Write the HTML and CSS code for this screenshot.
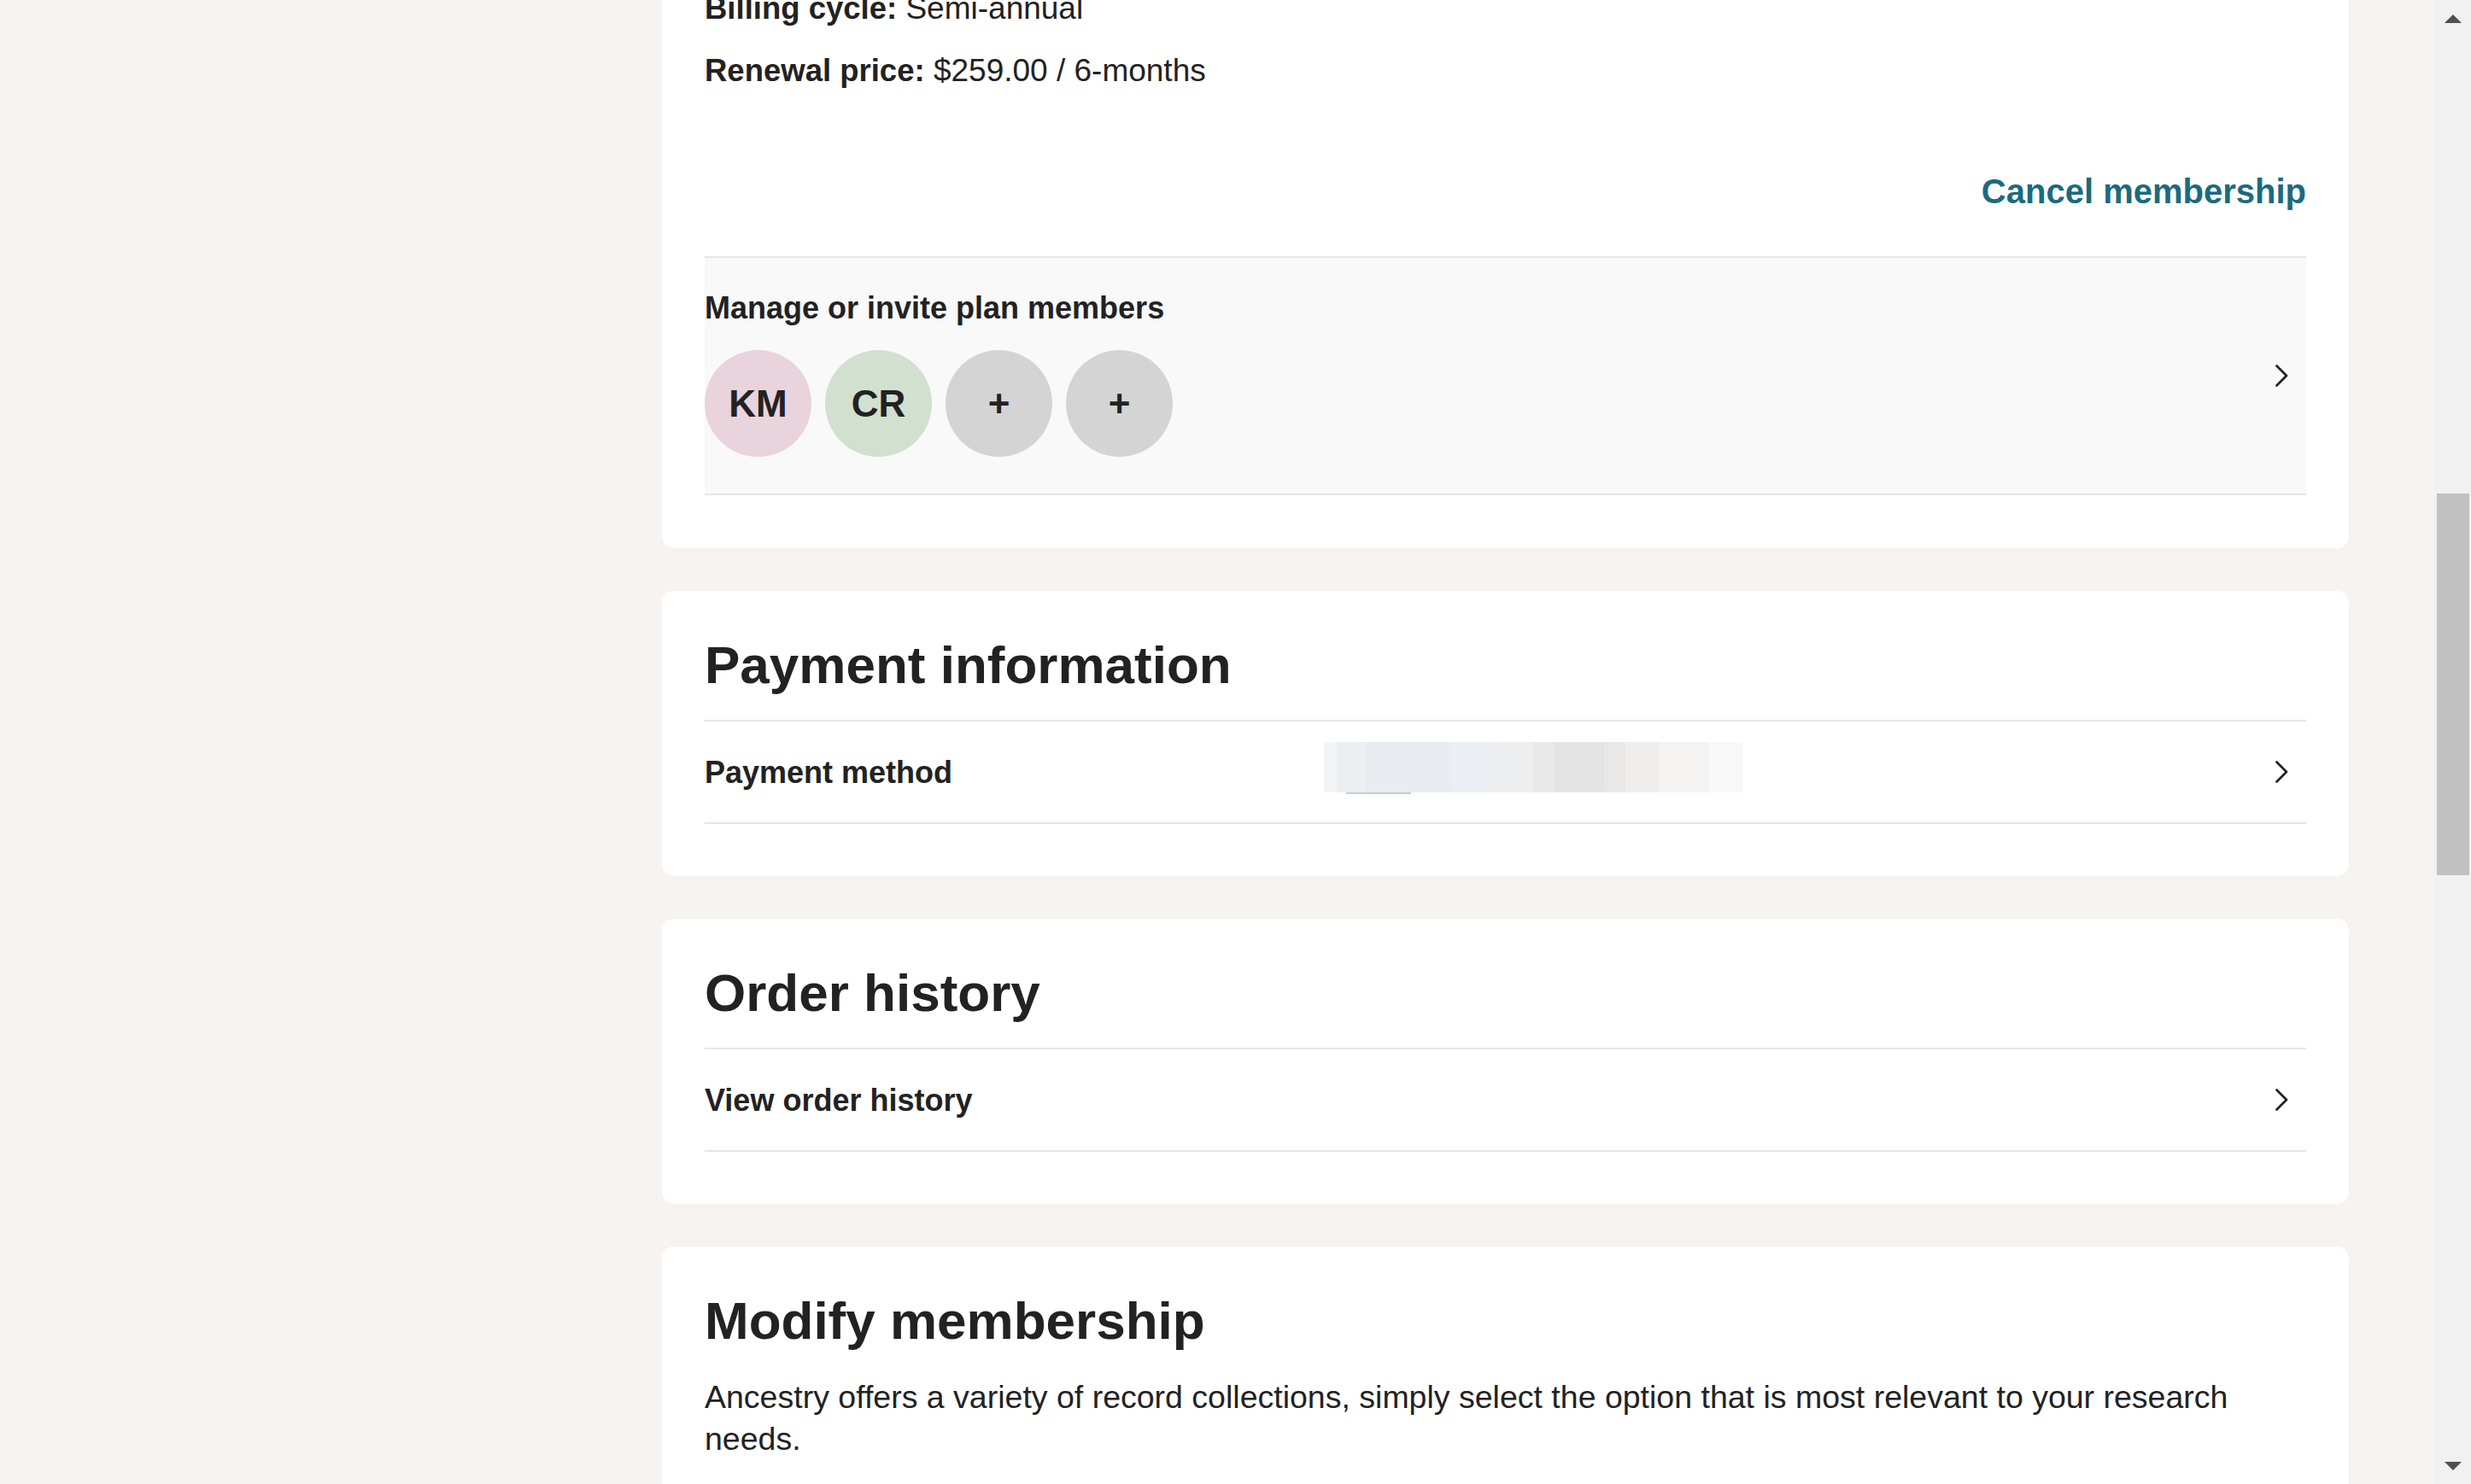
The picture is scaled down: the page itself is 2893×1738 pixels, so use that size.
FILE: index.html
```html
<!DOCTYPE html>
<html lang="en">
<head>
  <meta charset="UTF-8" />
  <meta name="viewport" content="width=device-width, initial-scale=1.0"/>
  <title>Membership settings</title>
  <link rel="stylesheet" href="styles.css">
</head>
<body>
<div class="page">
  <div class="layout">
    <aside class="sidebar"></aside>

    <main class="cards">
      <!-- 🔹 Membership card (scrolled, top is out of view) -->
      <section class="card">
        <div class="details">
          <p><strong>Billing cycle:</strong> Semi-annual</p>
          <p><strong>Renewal price:</strong> $259.00 / 6-months</p>
        </div>
        <div class="card-actions">
          <a class="link" href="#">Cancel membership</a>
        </div>
        <a class="members" href="#">
          <div>
            <div class="row-label">Manage or invite plan members</div>
            <div class="avatars">
              <span class="avatar avatar-pink">KM</span>
              <span class="avatar avatar-green">CR</span>
              <span class="avatar avatar-empty">+</span>
              <span class="avatar avatar-empty">+</span>
            </div>
          </div>
          <svg class="chevron chevron-low" width="16" height="28" viewBox="0 0 16 28"><path d="M2.5 2.5 L14 14 L2.5 25.5" /></svg>
        </a>
      </section>

      <!-- 🔹 Payment -->
      <section class="card">
        <h2 class="card-title">Payment information</h2>
        <div class="list">
          <a class="row row-grid" href="#">
            <span class="row-label">Payment method</span>
            <span class="blur"></span>
            <svg class="chevron" width="16" height="28" viewBox="0 0 16 28"><path d="M2.5 2.5 L14 14 L2.5 25.5" /></svg>
          </a>
        </div>
      </section>

      <!-- 🔹 Orders -->
      <section class="card">
        <h2 class="card-title">Order history</h2>
        <div class="list">
          <a class="row" href="#">
            <span class="row-label">View order history</span>
            <svg class="chevron" width="16" height="28" viewBox="0 0 16 28"><path d="M2.5 2.5 L14 14 L2.5 25.5" /></svg>
          </a>
        </div>
      </section>

      <!-- 🔹 Modify -->
      <section class="card">
        <h2 class="card-title">Modify membership</h2>
        <p class="intro">Ancestry offers a variety of record collections, simply select the option that is most relevant to your research needs.</p>
      </section>
    </main>
  </div>
</div>

<div class="scrollbar">
  <div class="sb-btn"><span class="arrow-up"></span></div>
  <div class="sb-track"><div class="sb-thumb"></div></div>
  <div class="sb-btn"><span class="arrow-down"></span></div>
</div>
</body>
</html>
```

FILE: styles.css
```css
body {
  margin: 0;
  height: 100vh;
  overflow: hidden;
  display: flex;
  background-color: #f6f3f0;
  font-family: "Liberation Sans", Arial, sans-serif;
  color: #222;
}
a {
  color: inherit;
  text-decoration: none;
}
.page {
  flex: 1;
  overflow: hidden;
}
.layout {
  display: grid;
  grid-template-columns: 625px 1fr;
  column-gap: 50px;
  max-width: 2650px;
  margin: -64px auto 0;
}
.cards {
  display: flex;
  flex-direction: column;
  gap: 50px;
}
.card {
  background: #fff;
  border-radius: 14px;
  padding: 50px 50px 61px;
}
.card-title {
  margin: 0;
  font-size: 62px;
  line-height: 74px;
  font-weight: bold;
}
.details {
  display: flex;
  flex-direction: column;
  gap: 25px;
}
.details p {
  margin: 0;
  font-size: 37px;
  line-height: 48px;
}
.details strong {
  font-size: 36.5px;
}
.card-actions {
  display: flex;
  justify-content: flex-end;
  padding: 93px 0 52px;
}
.link {
  color: #1b6a7f;
  font-size: 40px;
  line-height: 48px;
  font-weight: bold;
}
.members {
  display: flex;
  align-items: center;
  justify-content: space-between;
  padding: 37px 21px 43px 0;
  background: #f9f9f9;
  border-top: 2px solid #e5e5e5;
  border-bottom: 2px solid #e5e5e5;
  margin-bottom: 1px;
}
.row-label {
  font-size: 36px;
  line-height: 1.2;
  font-weight: bold;
}
.avatars {
  display: flex;
  gap: 16px;
  margin-top: 28px;
}
.avatar {
  width: 125px;
  height: 125px;
  border-radius: 50%;
  display: flex;
  align-items: center;
  justify-content: center;
  font-size: 44px;
  font-weight: bold;
  color: #222;
}
.avatar-pink { background: #e9d3dc; }
.avatar-green { background: #d1e0cf; }
.avatar-empty { background: #d4d4d4; }
.list {
  margin-top: 27px;
  border-top: 2px solid #e5e5e5;
}
.row {
  display: flex;
  align-items: center;
  justify-content: space-between;
  min-height: 118px;
  padding-right: 21px;
  border-bottom: 2px solid #e5e5e5;
}
.row-grid {
  display: grid;
  grid-template-columns: 725px 1fr auto;
}
.blur {
  position: relative;
  width: 490px;
  height: 59px;
  margin-bottom: 11px;
  background: linear-gradient(90deg, #f2f4f6 0 3%, #eceff2 3% 10%, #e8ebef 10% 30%, #ebeef2 30% 40%, #eceef0 40% 50%, #e9e9ea 50% 55%, #e4e4e4 55% 67%, #e9e8e6 67% 72%, #efeeec 72% 80%, #f4f3f2 80% 92%, #f9f8f8 92% 100%);
}
.blur::after {
  content: "";
  position: absolute;
  left: 26px;
  bottom: -2px;
  width: 76px;
  height: 2px;
  background: #c9ccd3;
}
.chevron path {
  fill: none;
  stroke: #222;
  stroke-width: 2.8;
  stroke-linecap: round;
  stroke-linejoin: round;
}
.chevron-low {
  margin-top: 6px;
}
.intro {
  margin: 28px 0 0;
  font-size: 37.5px;
  line-height: 49px;
}
.scrollbar {
  width: 43px;
  display: flex;
  flex-direction: column;
  background: #f1f1f1;
}
.sb-btn {
  height: 43px;
  display: flex;
  align-items: center;
  justify-content: center;
}
.arrow-up, .arrow-down {
  width: 0;
  height: 0;
  border-left: 10px solid transparent;
  border-right: 10px solid transparent;
}
.arrow-up { border-bottom: 10px solid #505050; }
.arrow-down { border-top: 10px solid #505050; }
.sb-track {
  flex: 1;
  padding: 0 2px 0 3px;
}
.sb-thumb {
  margin-top: 535px;
  height: 447px;
  background: #c1c1c1;
}
```
